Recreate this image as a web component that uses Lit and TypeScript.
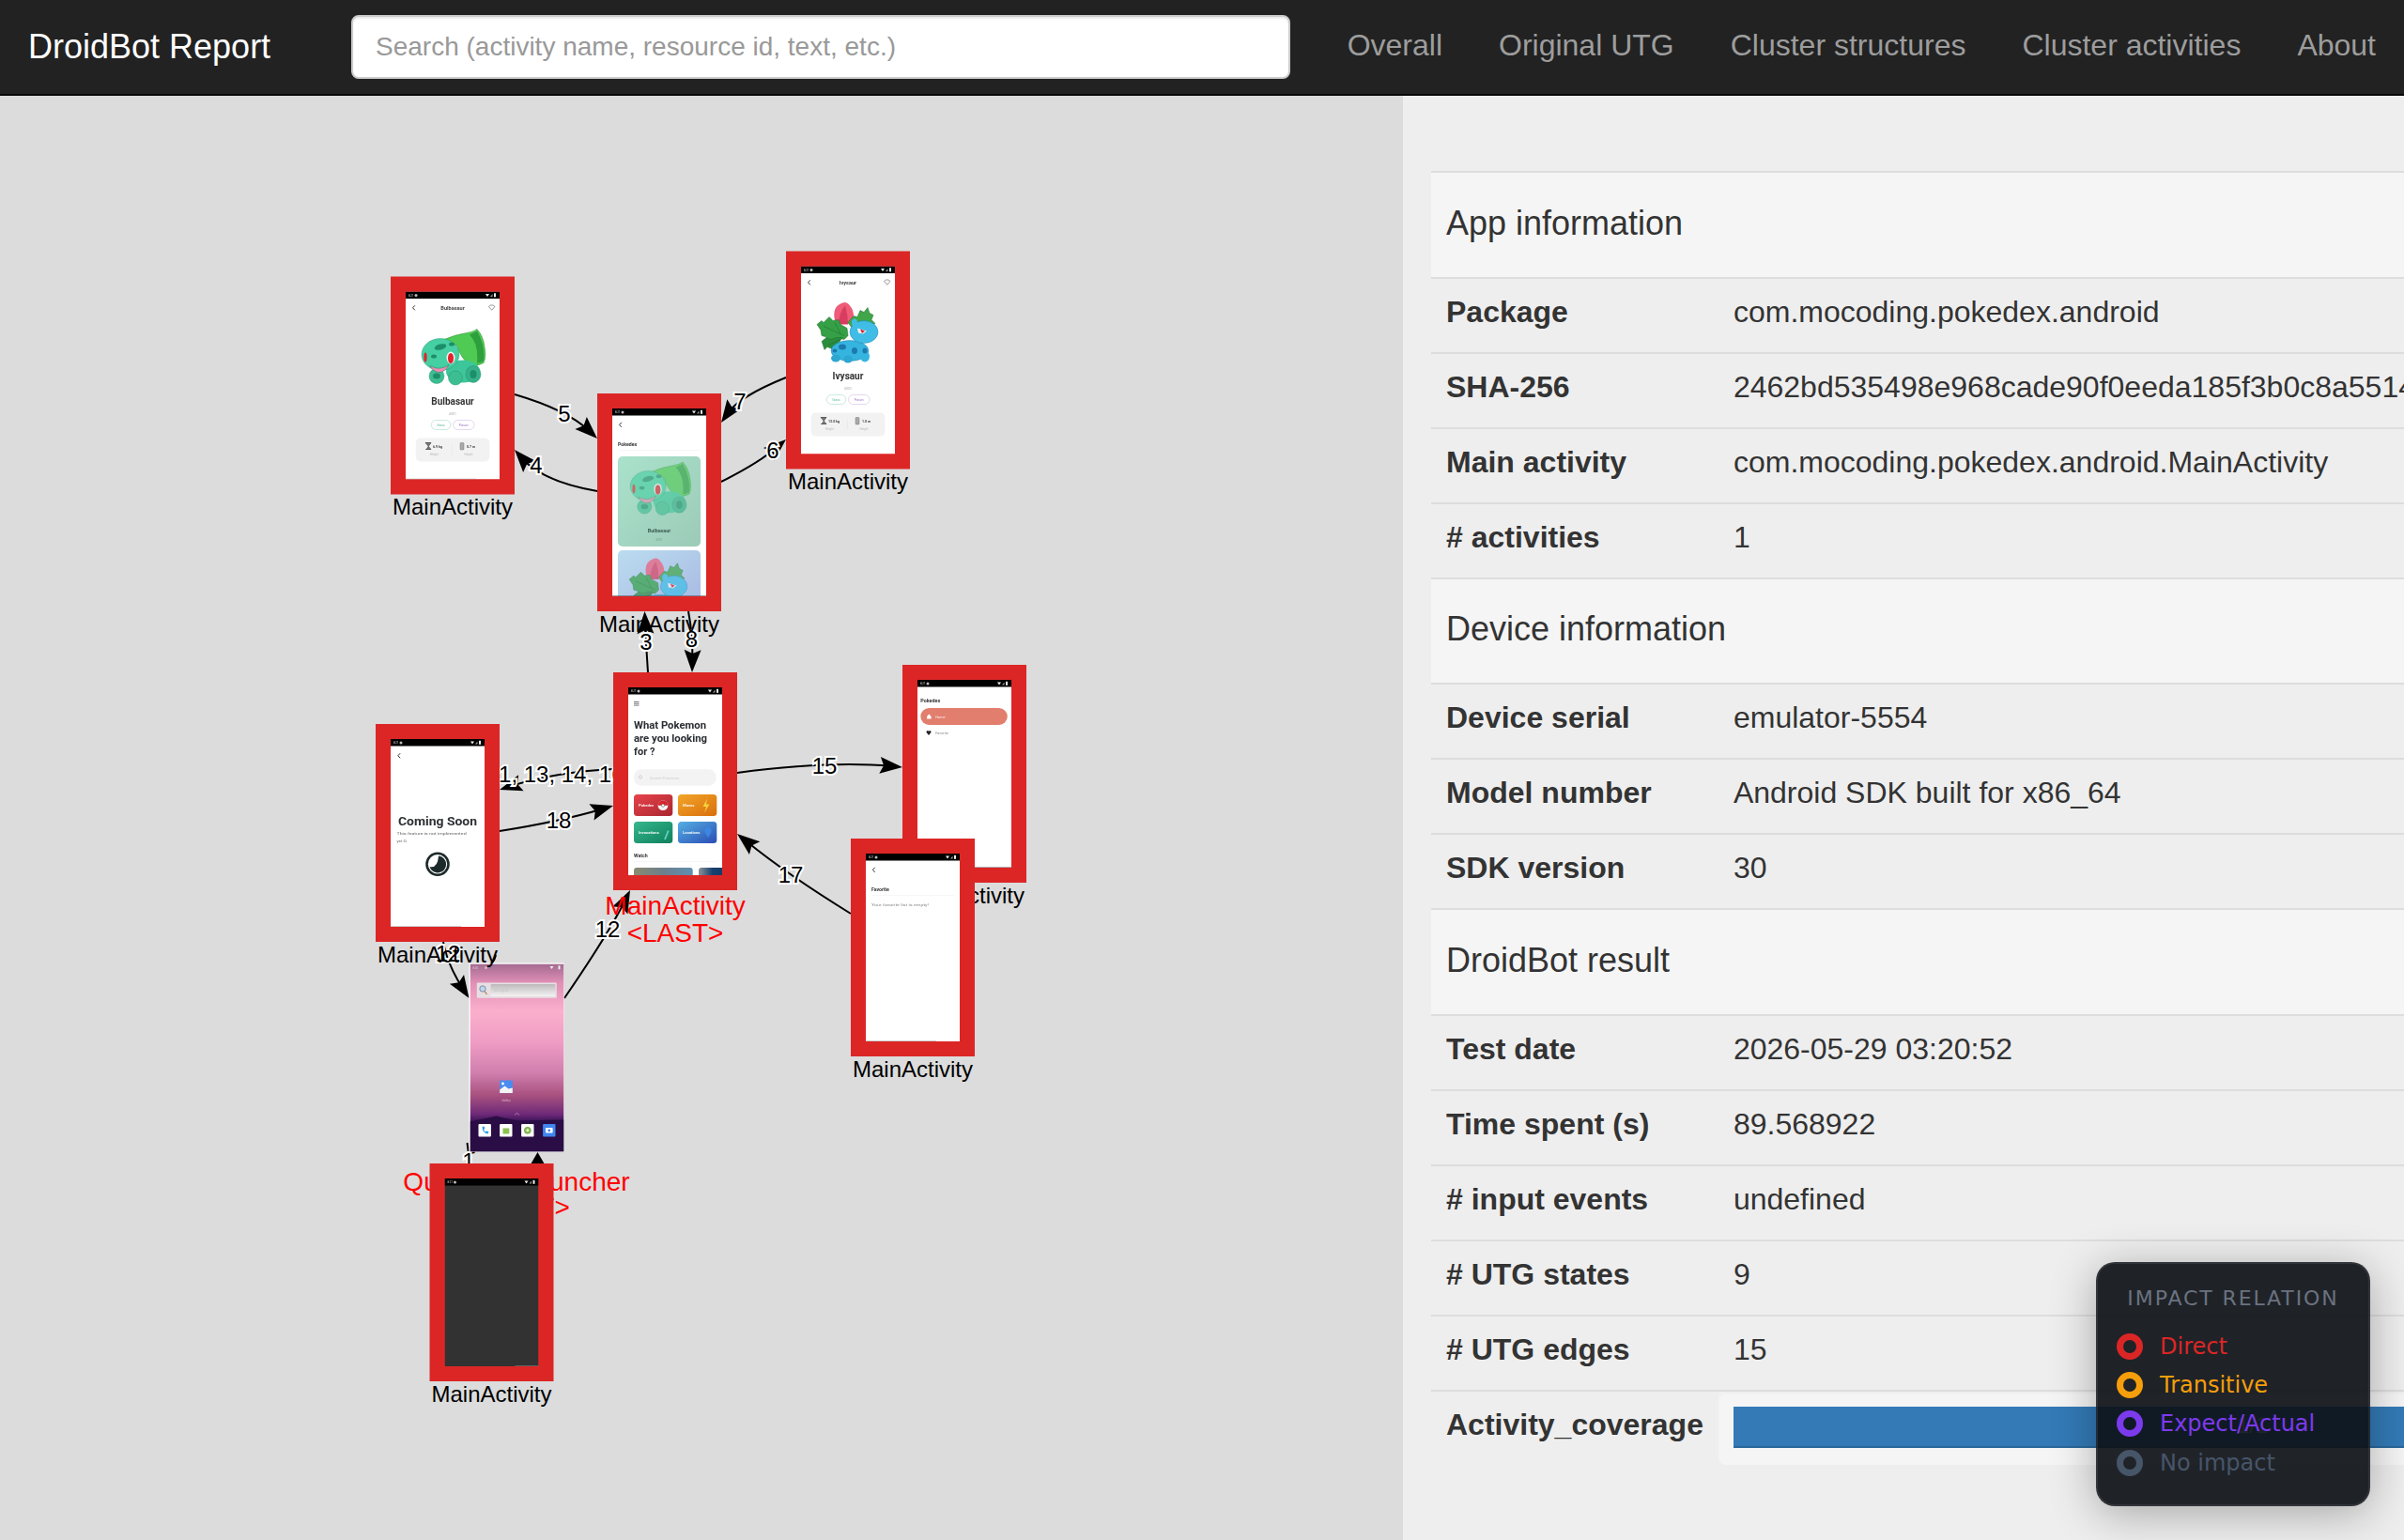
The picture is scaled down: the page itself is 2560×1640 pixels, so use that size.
import { LitElement, html, css, svg } from 'lit';
import { customElement } from 'lit/decorators.js';

type Pt = [number, number];
interface Edge { a: Pt; b: Pt; m: Pt; label: string; lp?: Pt; }

const RED = '#dc2626';

const edges: Edge[] = [
  { a: [548, 420], b: [636, 467], m: [598, 440], label: '5', lp: [601, 440] },
  { a: [636, 523], b: [548, 479], m: [585, 507], label: '4', lp: [571, 495] },
  { a: [837, 402], b: [768, 450], m: [795, 424], label: '7', lp: [788, 427] },
  { a: [768, 513], b: [837, 468], m: [805, 492], label: '6', lp: [823, 479] },
  { a: [690, 716], b: [686.5, 651], m: [688, 683], label: '3' },
  { a: [733, 651], b: [737, 716], m: [736.5, 680], label: '8' },
  { a: [653, 819], b: [532, 841], m: [592, 826], label: '11, 13, 14, 16', lp: [592, 824] },
  { a: [532, 885], b: [653, 858], m: [595, 873], label: '18' },
  { a: [785, 823], b: [961, 817], m: [878, 815], label: '15' },
  { a: [906, 973], b: [785, 888], m: [842, 931], label: '17' },
  { a: [601, 1063], b: [671, 948], m: [642, 1000], label: '12', lp: [647, 989] },
  { a: [472, 1003], b: [499.5, 1063], m: [481, 1030], label: '12', lp: [477, 1015] },
];

const appRows: [string, string][] = [
  ['Package', 'com.mocoding.pokedex.android'],
  ['SHA-256', '2462bd535498e968cade90f0eeda185f3b0c8a55146e0d7c2b91f4a83e6d5c07'],
  ['Main activity', 'com.mocoding.pokedex.android.MainActivity'],
  ['# activities', '1'],
];
const deviceRows: [string, string][] = [
  ['Device serial', 'emulator-5554'],
  ['Model number', 'Android SDK built for x86_64'],
  ['SDK version', '30'],
];
const resultRows: [string, string][] = [
  ['Test date', '2026-05-29 03:20:52'],
  ['Time spent (s)', '89.568922'],
  ['# input events', 'undefined'],
  ['# UTG states', '9'],
  ['# UTG edges', '15'],
];
const legend = [
  { name: 'Direct', cls: 'direct' },
  { name: 'Transitive', cls: 'transitive' },
  { name: 'Expect/Actual', cls: 'expect' },
  { name: 'No impact', cls: 'none' },
];

function edgePath(e: Edge) {
  // quadratic through m; the arrow sits on the end tangent
  const cx = 2 * e.m[0] - (e.a[0] + e.b[0]) / 2;
  const cy = 2 * e.m[1] - (e.a[1] + e.b[1]) / 2;
  const dx = e.b[0] - cx;
  const dy = e.b[1] - cy;
  const len = Math.hypot(dx, dy) || 1;
  const ux = dx / len;
  const uy = dy / len;
  const bx = e.b[0] - ux * 24;
  const by = e.b[1] - uy * 24;
  const head = `${e.b[0]},${e.b[1]} ${bx - uy * 9},${by + ux * 9} ${bx + ux * 4},${by + uy * 4} ${bx + uy * 9},${by - ux * 9}`;
  const lp = e.lp ?? e.m;
  return svg`
    <path d="M${e.a[0]} ${e.a[1]} Q${cx} ${cy} ${e.b[0] - ux * 12} ${e.b[1] - uy * 12}" fill="none" stroke="#000" stroke-width="2"></path>
    <polygon points=${head} fill="#000"></polygon>
    <text class="edge-label" x=${lp[0]} y=${lp[1] + 8.5}>${e.label}</text>`;
}

function statusBar() {
  return svg`
    <rect width="100" height="7.5" fill="#000"></rect>
    <text class="t" x="3" y="5.2" font-size="2.8" fill="#ddd">8:21</text>
    <circle cx="11" cy="4" r="1.5" fill="#bbb"></circle>
    <polygon points="85,2.5 89,2.5 87,5.5" fill="#eee"></polygon>
    <polygon points="90,5.5 92.5,5.5 92.5,2.5" fill="#999"></polygon>
    <rect x="94" y="1.8" width="2" height="4" fill="#eee"></rect>`;
}

function back(x: number, y: number) {
  return svg`<path d="M${x + 1.2} ${y - 2.5} L${x - 1.2} ${y} L${x + 1.2} ${y + 2.5}" fill="none" stroke="#333" stroke-width="1"></path>`;
}

function bulbasaur() {
  return svg`
    <path d="M41 51 Q52 46 65 44 Q72 43 76 40 Q83 48 84 59 Q86 70 83 76 Q76 80 68 78 Q58 70 55 58 Q48 54 41 51Z" fill="#4fca52" stroke="#2b8a35" stroke-width=".5"></path>
    <path d="M68 46 Q78 56 76 76 Q80 76 83 74 Q85 58 76 42Z" fill="#2f9f3c"></path>
    <ellipse cx="61" cy="85" rx="18" ry="12" fill="#3ec69a"></ellipse>
    <ellipse cx="37" cy="67" rx="20" ry="17" fill="#45cfa2" stroke="#1f8a68" stroke-width=".4"></ellipse>
    <circle cx="33" cy="90" r="8" fill="#3dbd92" stroke="#1f8a68" stroke-width=".4"></circle>
    <circle cx="53" cy="92" r="7.5" fill="#3dbd92" stroke="#1f8a68" stroke-width=".4"></circle>
    <ellipse cx="72" cy="88" rx="8" ry="9" fill="#35b088" stroke="#1f8a68" stroke-width=".4"></ellipse>
    <ellipse cx="37" cy="59" rx="6.5" ry="3" fill="#1f8e6b" transform="rotate(-15 37 59)"></ellipse>
    <ellipse cx="30" cy="69" rx="3" ry="2" fill="#1f8e6b"></ellipse>
    <ellipse cx="49" cy="56" rx="3" ry="2" fill="#1f8e6b"></ellipse>
    <ellipse cx="33" cy="90" rx="4" ry="3" fill="#1f8e6b"></ellipse>
    <ellipse cx="72" cy="88" rx="3.5" ry="4.5" fill="#1f8e6b"></ellipse>
    <ellipse cx="48" cy="70.5" rx="4.5" ry="6.5" fill="#f2f2f2"></ellipse>
    <ellipse cx="48" cy="71" rx="3" ry="5.5" fill="#e3202d"></ellipse>
    <ellipse cx="21" cy="70" rx="1.6" ry="5" fill="#e3202d"></ellipse>
    <path d="M26 79 Q36 85 46 78 Q42 86 35 86 Q29 85 26 79Z" fill="#ef8cb4" stroke="#1f6a50" stroke-width=".4"></path>`;
}

function ivysaur() {
  return svg`
    <path d="M36 58 Q33 44 42 40 Q48 36 52 42 Q58 48 55 62Z" fill="#ee5b78"></path>
    <path d="M40 62 Q41 48 47 42 Q50 52 50 62Z" fill="#d83d5f"></path>
    <path d="M50 60 L56 53 L60 54 L63 47 L67 49 L71 44 L73 50 L77 52 L75 57 L79 61 L70 64 L66 68 L56 68Z" fill="#3fa648" stroke="#1e6b2d" stroke-width=".5"></path>
    <path d="M17 62 L22 58 L24 60 L30 54 L34 58 L40 57 L42 62 L49 66 L50 74 L46 78 L38 76 L36 81 L30 79 L26 75 L22 74 L21 68Z" fill="#34a044" stroke="#1e6b2d" stroke-width=".5"></path>
    <path d="M22 80 L27 76 L32 78 L38 76 L44 76 L40 82 L36 84 L33 88 L28 86 L25 89Z" fill="#2b8c3c" stroke="#1e6b2d" stroke-width=".4"></path>
    <path d="M24 64 L46 74 M36 60 L42 72 M29 84 L42 78" stroke="#1e6b2d" stroke-width=".5" fill="none"></path>
    <ellipse cx="52" cy="90" rx="20" ry="11" fill="#35b4df" stroke="#17709c" stroke-width=".4"></ellipse>
    <ellipse cx="67" cy="70" rx="15" ry="12" fill="#3fbde6" stroke="#17709c" stroke-width=".4"></ellipse>
    <ellipse cx="57" cy="60" rx="3" ry="4" fill="#3fbde6"></ellipse>
    <ellipse cx="37" cy="98" rx="5" ry="4" fill="#2ea6d2"></ellipse>
    <ellipse cx="50" cy="99" rx="5" ry="4" fill="#2ea6d2"></ellipse>
    <ellipse cx="68" cy="96" rx="5" ry="6" fill="#35b4df"></ellipse>
    <ellipse cx="44" cy="86" rx="4" ry="3" fill="#1a79ad"></ellipse>
    <ellipse cx="57" cy="90" rx="3" ry="3.5" fill="#1a79ad"></ellipse>
    <ellipse cx="36" cy="90" rx="2.5" ry="2" fill="#1a79ad"></ellipse>
    <ellipse cx="68" cy="90" rx="2.5" ry="3" fill="#1a79ad"></ellipse>
    <path d="M60 66 L70 69 L66 72 L61 71Z" fill="#f2f2f2"></path>
    <path d="M63 67 L68 69 L65 71.5Z" fill="#dd1f2d"></path>`;
}

function statCard(weight: string, height: string) {
  return svg`
    <rect x="10.7" y="156" width="78.6" height="25" rx="5" fill="#f2f2f2"></rect>
    <path d="M21 161 H27 L22 168 H27 L21 161 Z M21 161 H27 M21 168 H27" fill="#777" stroke="#555" stroke-width=".7"></path>
    <text class="t b" x="29" y="166" font-size="3.6" fill="#444">${weight}</text>
    <text class="t" x="30.3" y="174" text-anchor="middle" font-size="3" fill="#bbb">Weight</text>
    <rect x="49" y="163" width=".4" height="11" fill="#ddd"></rect>
    <rect x="58" y="161" width="4" height="7.5" rx=".8" fill="#aaa" stroke="#666" stroke-width=".4"></rect>
    <text class="t b" x="65" y="166" font-size="3.6" fill="#444">${height}</text>
    <text class="t" x="67" y="174" text-anchor="middle" font-size="3" fill="#bbb">Height</text>`;
}

function detail(name: string, no: string, weight: string, height: string, art: unknown) {
  return svg`
    <rect width="100" height="200" fill="#fff"></rect>
    ${statusBar()}
    ${back(8.7, 17.3)}
    <text class="t b" x="50" y="19.2" text-anchor="middle" font-size="5.6" fill="#444">${name}</text>
    <path d="M88.5 16 L90.5 14.5 H93 L95 16 L91.7 19.8Z" fill="none" stroke="#555" stroke-width=".6"></path>
    ${art}
    <text class="t b" x="50" y="120" text-anchor="middle" font-size="10" fill="#333">${name}</text>
    <text class="t" x="50" y="131.5" text-anchor="middle" font-size="3.4" fill="#aaa">${no}</text>
    <rect x="27.3" y="137" width="20.5" height="10" rx="5" fill="none" stroke="#a5dcc6" stroke-width=".6"></rect>
    <text class="t" x="37.5" y="143.2" text-anchor="middle" font-size="3.2" fill="#5bb795">Grass</text>
    <rect x="50.5" y="137" width="22.5" height="10" rx="5" fill="none" stroke="#d2bce6" stroke-width=".6"></rect>
    <text class="t" x="61.7" y="143.2" text-anchor="middle" font-size="3.2" fill="#9c72c2">Poison</text>
    ${statCard(weight, height)}`;
}

function bulbasaurScreen() {
  return svg`${detail('Bulbasaur', '#001', '6.9 kg', '0.7 m', bulbasaur())}
    <rect y="199.3" width="75" height=".7" fill="#aaa"></rect>`;
}

function ivysaurScreen() {
  return detail('Ivysaur', '#002', '13.0 kg', '1.0 m', ivysaur());
}

function pokedexScreen() {
  return svg`
    <rect width="100" height="200" fill="#fff"></rect>
    ${statusBar()}
    ${back(8.7, 17.3)}
    <text class="t b" x="6" y="39.8" font-size="5.2" fill="#333">Pokedex</text>
    <rect x="6" y="44" width="88" height=".5" fill="#eee"></rect>
    <rect x="6" y="51" width="88" height="96" rx="5" fill="url(#cardGreen)"></rect>
    <g opacity=".62" transform="translate(3 19) scale(.95)">${bulbasaur()}</g>
    <text class="t b" x="50" y="132" text-anchor="middle" font-size="5.4" fill="#3d5b50">Bulbasaur</text>
    <text class="t" x="50" y="141" text-anchor="middle" font-size="3.2" fill="#7fa697">#001</text>
    <rect x="6" y="151" width="88" height="60" rx="5" fill="url(#cardBlue)"></rect>
    <g opacity=".7" transform="translate(2 123) scale(.95)">${ivysaur()}</g>
    <rect y="199.4" width="100" height=".6" fill="#556"></rect>`;
}

function tile(x: number, y: number, grad: string, label: string) {
  return svg`
    <rect x=${x} y=${y} width="41.3" height="23" rx="3.5" fill="url(#${grad})"></rect>
    <text class="t b" x=${x + 5} y=${y + 13} font-size="4.2" fill="#fff" fill-opacity=".9">${label}</text>`;
}

function mainScreen() {
  return svg`
    <rect width="100" height="200" fill="#fff"></rect>
    ${statusBar()}
    <path d="M6 15.5 H11.5 M6 17.3 H11.5 M6 19.1 H11.5" stroke="#444" stroke-width=".7"></path>
    <text class="t b h" x="6" y="44" font-size="11" fill="#2a2d33" textLength="77" lengthAdjust="spacingAndGlyphs">What Pokemon</text>
    <text class="t b h" x="6" y="58" font-size="11" fill="#2a2d33" textLength="78" lengthAdjust="spacingAndGlyphs">are you looking</text>
    <text class="t b h" x="6" y="72" font-size="11" fill="#2a2d33">for ?</text>
    <rect x="6" y="87.3" width="87.7" height="17.4" rx="8" fill="#f3f3f3"></rect>
    <circle cx="13" cy="95.5" r="1.6" fill="none" stroke="#bbb" stroke-width=".6"></circle>
    <text class="t" x="22.7" y="97.5" font-size="4.2" fill="#d0d0d0">Search Pokemon</text>
    ${tile(6, 114, 'tRed', 'Pokedex')}
    <circle cx="37" cy="125.7" r="5.4" fill="#f6f6f6"></circle>
    <path d="M31.6 125.7 A5.4 5.4 0 0 1 42.4 125.7Z" fill="#d9252f"></path>
    <circle cx="37" cy="125.7" r="1.6" fill="#fff" stroke="#444" stroke-width=".5"></circle>
    ${tile(53, 114, 'tOrange', 'Moves')}
    <polygon points="84,118.5 79.5,127 83,127 81,133.5 86.5,124.5 83,124.5" fill="#f5d23c"></polygon>
    ${tile(6, 143, 'tGreen', 'Invocations')}
    <path d="M38 162 L42 152 L43.5 153 L40 162Z" fill="#5fd0c0"></path>
    ${tile(53, 143, 'tBlue', 'Locations')}
    <path d="M85 160 Q80.5 153.5 81.5 151.5 A3.7 3.7 0 0 1 88.5 151.5 Q89.5 153.5 85 160Z" fill="#3a86e0"></path>
    <text class="t b" x="6" y="181" font-size="5.2" fill="#333">Watch</text>
    <rect x="6" y="185" width="88" height=".5" fill="#eee"></rect>
    <rect x="6" y="192" width="62.7" height="12" rx="3" fill="url(#thumb)"></rect>
    <rect x="75" y="192" width="30" height="12" rx="3" fill="url(#thumb2)"></rect>`;
}

function comingScreen() {
  return svg`
    <rect width="100" height="200" fill="#fff"></rect>
    ${statusBar()}
    ${back(9, 17.7)}
    <text class="t b" x="50" y="91.5" text-anchor="middle" font-size="12" fill="#2f3136" textLength="84" lengthAdjust="spacingAndGlyphs">Coming Soon</text>
    <text class="t" x="6.6" y="102" font-size="4.2" fill="#666" textLength="74" lengthAdjust="spacingAndGlyphs">This feature is not implemented</text>
    <text class="t" x="6.6" y="109.5" font-size="4.2" fill="#666">yet :D</text>
    <circle cx="50" cy="133.3" r="11.5" fill="#fff" stroke="#1f2a2a" stroke-width="2.6"></circle>
    <path d="M51 124.5 A9 9 0 1 1 41.5 136 Q50 138 51 124.5Z" fill="#1f2a2a"></path>
    <rect y="199.3" width="75" height=".7" fill="#bbb"></rect>`;
}

function drawerScreen() {
  return svg`
    <rect width="100" height="200" fill="#fff"></rect>
    ${statusBar()}
    <text class="t b" x="3.3" y="23.5" font-size="5.4" fill="#333">Pokedex</text>
    <rect x="3.3" y="30" width="92.5" height="18" rx="9" fill="#e27e6e"></rect>
    <path d="M10 39 L12.3 36.5 L14.6 39 V41.5 H10Z" fill="#fff"></path>
    <text class="t" x="19.3" y="40.5" font-size="3.8" fill="#fff" fill-opacity=".85">Home</text>
    <path d="M12 59 L9.4 55.8 Q9.4 54 11 54 L12 54.8 L13 54 Q14.6 54 14.6 55.8Z" fill="#222"></path>
    <text class="t" x="19.3" y="57.8" font-size="3.8" fill="#888">Favorite</text>
    <rect x="60" y="199.2" width="40" height=".8" fill="#999"></rect>`;
}

function favoriteScreen() {
  return svg`
    <rect width="100" height="200" fill="#fff"></rect>
    ${statusBar()}
    ${back(8.5, 17.3)}
    <text class="t b" x="6" y="39.8" font-size="5.2" fill="#333">Favorite</text>
    <rect x="6" y="44.5" width="88" height=".5" fill="#eee"></rect>
    <text class="t" x="6" y="56" font-size="3.8" fill="#888" textLength="61" lengthAdjust="spacingAndGlyphs">Your favorite list is empty!</text>
    <rect y="199.3" width="75" height=".7" fill="#bbb"></rect>`;
}

function launcherScreen() {
  return svg`
    <rect width="100" height="200" fill="url(#wall)"></rect>
    <text class="t" x="3" y="5.2" font-size="2.8" fill="#eee" fill-opacity=".7">8:20</text>
    <circle cx="17" cy="4" r="1.5" fill="#ddd" fill-opacity=".7"></circle>
    <polygon points="85,2.5 89,2.5 87,5.5" fill="#eee"></polygon>
    <rect x="94" y="1.8" width="2" height="4" fill="#eee"></rect>
    <rect x="7.3" y="20" width="85" height="16.3" rx="1" fill="#e6e0e3"></rect>
    <rect x="22" y="21.5" width="69" height="13" rx="1" fill="url(#gbar)"></rect>
    <circle cx="13.5" cy="26.5" r="3.2" fill="#bcd6ee" stroke="#6c7f92" stroke-width=".8"></circle>
    <path d="M15.5 29 L18 32.5" stroke="#b8784a" stroke-width="1.2"></path>
    <text class="t" x="25" y="29.5" font-size="5" fill="#c9c9c9">Google</text>
    <rect x="31.7" y="124" width="13.6" height="13.6" fill="#4a8cf0"></rect>
    <circle cx="35" cy="127.5" r="1.4" fill="#fff"></circle>
    <path d="M31.7 137.6 V134 L37 130 L41 133 L45.3 132 V137.6Z" fill="#f4f4f4"></path>
    <text class="t" x="38.5" y="146" text-anchor="middle" font-size="3" fill="#f0d0e0" fill-opacity=".7">Gallery</text>
    <path d="M47.5 161 L50 158.8 L52.5 161" fill="none" stroke="#d8b0d0" stroke-width=".6"></path>
    <path d="M0 168 L14 165 L28 162 L36 164 L52 167 L100 166 V200 H0Z" fill="#2a0d44"></path>
    <rect x="9" y="170.5" width="13.4" height="13.4" rx="1" fill="#fff"></rect>
    <path d="M13 173.5 Q13 180 19 181 L20 178.8 L17.5 177.8 L16 179 Q15 177.5 14.8 176 L16 175 L15 173Z" fill="#2f9fe0"></path>
    <rect x="31.6" y="170.5" width="13.4" height="13.4" rx="1" fill="#fff"></rect>
    <rect x="35" y="175" width="6.8" height="6" fill="#8cc152"></rect>
    <rect x="54.6" y="170.5" width="13.4" height="13.4" rx="1" fill="#fff"></rect>
    <circle cx="61.3" cy="177.3" r="3.5" fill="#8cc152" stroke="#5f8f30" stroke-width=".6"></circle>
    <circle cx="61.3" cy="177.3" r="1.3" fill="#fff"></circle>
    <rect x="77.6" y="170.5" width="13.4" height="13.4" rx="1" fill="#3f86ee"></rect>
    <rect x="80.5" y="174.5" width="7.6" height="5.6" rx=".8" fill="#fff"></rect>
    <circle cx="84.3" cy="177.3" r="1.4" fill="#3f86ee"></circle>`;
}

function blackScreen() {
  return svg`
    <rect width="100" height="200" fill="#333"></rect>
    ${statusBar()}
    <rect x="75" y="199.3" width="25" height=".7" fill="#777"></rect>`;
}

function screen(x: number, y: number, body: unknown) {
  return svg`
    <g transform="translate(${x} ${y})" clip-path="url(#screenClip)">
      <g filter="url(#soft)">${body}</g>
    </g>`;
}

function node(x: number, y: number, body: unknown) {
  return svg`
    <rect x=${x} y=${y} width="132" height="232" fill=${RED}></rect>
    ${screen(x + 16, y + 16, body)}`;
}

function nodeLabel(x: number, y: number) {
  return svg`<text class="node-label" x=${x + 66} y=${y + 232 + 21.6}>MainActivity</text>`;
}

@customElement('app-root')
export class AppRoot extends LitElement {
  static styles = css`
    :host {
      display: block;
      width: 2560px;
      height: 1640px;
      overflow: hidden;
      position: relative;
      font-family: "Liberation Sans", Arial, sans-serif;
      color: #333;
    }

    .navbar {
      display: flex;
      align-items: center;
      height: 100px;
      background: #222;
      border-bottom: 2px solid #080808;
    }
    .brand {
      width: 374px;
      box-sizing: border-box;
      padding-left: 30px;
      font-size: 36px;
      color: #fff;
      white-space: nowrap;
    }
    .search {
      width: 1000px;
      height: 68px;
      box-sizing: border-box;
      padding: 0 24px;
      font-family: inherit;
      font-size: 28px;
      color: #555;
      background: #fff;
      border: 2px solid #ccc;
      border-radius: 8px;
      box-shadow: inset 0 2px 2px rgba(0, 0, 0, 0.075);
      outline: none;
    }
    .search::placeholder {
      color: #999;
      opacity: 1;
    }
    .links {
      display: flex;
      margin-left: auto;
      padding-bottom: 4px;
    }
    .links a {
      padding: 0 30px;
      font-size: 32px;
      line-height: 40px;
      color: #9d9d9d;
      white-space: nowrap;
    }

    .main {
      display: flex;
      height: 1538px;
    }
    .graph {
      flex: 0 0 1494px;
      background: #dcdcdc;
    }
    .graph svg {
      display: block;
    }
    .info {
      flex: 1;
      min-width: 0;
      overflow: hidden;
      background: #eee;
      padding: 80px 0 0 30px;
    }

    table {
      border-collapse: collapse;
      width: max-content;
      font-size: 32px;
      line-height: 45.9px;
    }
    th, td {
      padding: 13px 16px 19px;
      border-top: 2px solid #ddd;
      text-align: left;
      vertical-align: top;
      white-space: nowrap;
    }
    th {
      font-weight: 700;
    }
    .section th {
      padding: 16px;
      background: #f5f5f5;
      font-weight: 400;
    }
    h4 {
      margin: 18.5px 0 21.5px;
      font-size: 36px;
      font-weight: 500;
      line-height: 38.9px;
    }
    td.bar-cell {
      padding: 16px;
      background: #f5f5f5;
      border-radius: 8px;
      box-shadow: inset 0 2px 2px rgba(0, 0, 0, 0.03);
    }
    .progress {
      height: 44px;
      background: #337ab7;
      box-shadow: inset 0 -2px 0 rgba(0, 0, 0, 0.15);
      color: #fff;
      font-size: 24px;
      line-height: 40px;
      text-align: center;
    }

    .legend {
      position: absolute;
      right: 36px;
      bottom: 36px;
      width: 292px;
      height: 260px;
      box-sizing: border-box;
      padding: 22px 20px 0;
      background: rgba(13, 17, 23, 0.92);
      border: 2px solid rgba(255, 255, 255, 0.08);
      border-radius: 20px;
      box-shadow: 0 8px 48px rgba(0, 0, 0, 0.3);
      font-family: "DejaVu Sans", sans-serif;
    }
    .legend-title {
      height: 30px;
      margin-bottom: 15px;
      font-size: 22px;
      line-height: 30px;
      letter-spacing: 1.9px;
      text-align: center;
      white-space: nowrap;
      color: #6b7280;
    }
    .legend-row {
      display: flex;
      align-items: center;
      gap: 18px;
      height: 41.3px;
      font-size: 24px;
    }
    .ring {
      flex: none;
      width: 28px;
      height: 28px;
      box-sizing: border-box;
      border: 7px solid currentColor;
      border-radius: 50%;
    }
    .direct { color: #dc2626; }
    .transitive { color: #f59e0b; }
    .expect { color: #7c3aed; }
    .none { color: #475569; }

    .edge-label {
      font-family: "Liberation Sans", Arial, sans-serif;
      font-size: 24px;
      text-anchor: middle;
      fill: #000;
      stroke: #fff;
      stroke-width: 4px;
      paint-order: stroke;
    }
    .node-label {
      font-family: "Liberation Sans", Arial, sans-serif;
      font-size: 24px;
      text-anchor: middle;
      fill: #000;
    }
    .node-label-red {
      font-family: "Liberation Sans", Arial, sans-serif;
      font-size: 28px;
      text-anchor: middle;
      fill: #f00;
    }
    .t {
      font-family: Roboto, "Liberation Sans", sans-serif;
    }
    .b {
      font-weight: 700;
    }
  `;

  private renderGraph() {
    return svg`
      <defs>
        <clipPath id="screenClip"><rect width="100" height="200"></rect></clipPath>
        <filter id="soft" x="-5%" y="-5%" width="110%" height="110%">
          <feGaussianBlur stdDeviation=".35"></feGaussianBlur>
        </filter>
        <linearGradient id="cardGreen" x1="0" y1="0" x2="1" y2="1">
          <stop offset="0" stop-color="#aae2cc"></stop>
          <stop offset="1" stop-color="#9ccbb8"></stop>
        </linearGradient>
        <linearGradient id="cardBlue" x1="0" y1="0" x2="1" y2="1">
          <stop offset="0" stop-color="#bbdcf0"></stop>
          <stop offset="1" stop-color="#a8b9e2"></stop>
        </linearGradient>
        <linearGradient id="tRed" x1="0" y1="0" x2="1" y2="1">
          <stop offset="0" stop-color="#e8434b"></stop>
          <stop offset="1" stop-color="#a92630"></stop>
        </linearGradient>
        <linearGradient id="tOrange" x1="0" y1="0" x2="1" y2="1">
          <stop offset="0" stop-color="#f2a52a"></stop>
          <stop offset="1" stop-color="#d96f0c"></stop>
        </linearGradient>
        <linearGradient id="tGreen" x1="0" y1="0" x2="1" y2="1">
          <stop offset="0" stop-color="#37b78c"></stop>
          <stop offset="1" stop-color="#0e805c"></stop>
        </linearGradient>
        <linearGradient id="tBlue" x1="0" y1="0" x2="1" y2="1">
          <stop offset="0" stop-color="#55b0e3"></stop>
          <stop offset="1" stop-color="#2a4cb5"></stop>
        </linearGradient>
        <linearGradient id="thumb" x1="0" y1="0" x2="1" y2="0">
          <stop offset="0" stop-color="#8a8a70"></stop>
          <stop offset=".5" stop-color="#6d7f8c"></stop>
          <stop offset="1" stop-color="#5f8fb0"></stop>
        </linearGradient>
        <linearGradient id="thumb2" x1="0" y1="0" x2="1" y2="0">
          <stop offset="0" stop-color="#8f9397"></stop>
          <stop offset=".5" stop-color="#16406e"></stop>
          <stop offset="1" stop-color="#123a66"></stop>
        </linearGradient>
        <linearGradient id="wall" x1="0" y1="0" x2="0" y2="1">
          <stop offset="0" stop-color="#a36a90"></stop>
          <stop offset=".1" stop-color="#e08fb6"></stop>
          <stop offset=".25" stop-color="#fbafcc"></stop>
          <stop offset=".42" stop-color="#ee9cc4"></stop>
          <stop offset=".58" stop-color="#d07fae"></stop>
          <stop offset=".7" stop-color="#a8517f"></stop>
          <stop offset=".8" stop-color="#6f2a78"></stop>
          <stop offset=".84" stop-color="#3a1458"></stop>
          <stop offset="1" stop-color="#24083e"></stop>
        </linearGradient>
        <linearGradient id="gbar" x1="0" y1="0" x2="0" y2="1">
          <stop offset="0" stop-color="#bdb9bb"></stop>
          <stop offset="1" stop-color="#f4f2f3"></stop>
        </linearGradient>
      </defs>

      ${edges.map(edgePath)}
      <path d="M528 1017 Q526 1026 519 1028" fill="none" stroke="#000" stroke-width="2"></path>
      <path d="M497.5 1217 L499 1228.5 L505.5 1227" fill="none" stroke="#000" stroke-width="2"></path>
      <polygon points="572.5,1227 565,1240 580,1240" fill="#000"></polygon>
      <text class="edge-label" x="499" y="1245">1</text>

      <text class="node-label-red" x="550" y="1268">QuickstepLauncher</text>
      <text class="node-label-red" x="550" y="1295">&lt;FIRST&gt;</text>
      <rect x="499.5" y="1025.5" width="101" height="201" fill="#fff"></rect>
      ${screen(500.5, 1026.5, launcherScreen())}

      ${node(400, 771, comingScreen())}
      ${nodeLabel(400, 771)}
      ${node(416, 294.5, bulbasaurScreen())}
      ${nodeLabel(416, 294.5)}
      ${node(837, 267.5, ivysaurScreen())}
      ${nodeLabel(837, 267.5)}
      ${node(636, 419, pokedexScreen())}
      ${nodeLabel(636, 419)}
      ${node(653, 716, mainScreen())}
      <text class="node-label-red" x="719" y="974">MainActivity</text>
      <text class="node-label-red" x="719" y="1003">&lt;LAST&gt;</text>
      ${nodeLabel(961, 708)}
      ${node(961, 708, drawerScreen())}
      ${node(906, 893, favoriteScreen())}
      ${nodeLabel(906, 893)}
      ${node(457.5, 1239, blackScreen())}
      ${nodeLabel(457.5, 1239)}
    `;
  }

  private renderRows(rows: [string, string][]) {
    return rows.map(([k, v]) => html`<tr><th>${k}</th><td>${v}</td></tr>`);
  }

  render() {
    return html`
      <nav class="navbar">
        <div class="brand">DroidBot Report</div>
        <input class="search" placeholder="Search (activity name, resource id, text, etc.)" />
        <div class="links">
          <a>Overall</a>
          <a>Original UTG</a>
          <a>Cluster structures</a>
          <a>Cluster activities</a>
          <a>About</a>
        </div>
      </nav>
      <div class="main">
        <div class="graph">
          <svg width="1494" height="1538" viewBox="0 102 1494 1538">${this.renderGraph()}</svg>
        </div>
        <div class="info">
          <table>
            <tr class="section"><th colspan="2"><h4>App information</h4></th></tr>
            ${this.renderRows(appRows)}
            <tr class="section"><th colspan="2"><h4>Device information</h4></th></tr>
            ${this.renderRows(deviceRows)}
            <tr class="section"><th colspan="2"><h4>DroidBot result</h4></th></tr>
            ${this.renderRows(resultRows)}
            <tr>
              <th>Activity_coverage</th>
              <td class="bar-cell"><div class="progress">1/1</div></td>
            </tr>
          </table>
        </div>
      </div>
      <div class="legend">
        <div class="legend-title">IMPACT RELATION</div>
        ${legend.map(
          (l) => html`<div class="legend-row ${l.cls}"><span class="ring"></span><span>${l.name}</span></div>`
        )}
      </div>
    `;
  }
}

declare global {
  interface HTMLElementTagNameMap {
    'app-root': AppRoot;
  }
}
